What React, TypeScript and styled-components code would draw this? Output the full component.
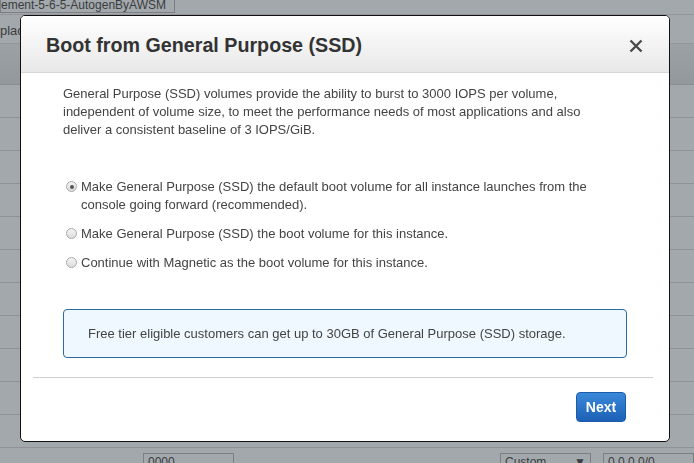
import React, { useState } from 'react';
import styled, { createGlobalStyle } from 'styled-components';

const GlobalStyle = createGlobalStyle`
    html, body {
        margin: 0;
        padding: 0;
        width: 694px;
        height: 463px;
        overflow: hidden;
        background: #a3a8ac;
        font-family: "Liberation Sans", Arial, sans-serif;
    }
`;

// dimmed page behind the dialog
const Page = styled.div`
    width: 694px;
    height: 463px;
    display: flex;
    flex-direction: column;
    background: #a3a8ac;
    color: #3a3d40;
    font-size: 13px;
    overflow: hidden;
`;

const TopInput = styled.div`
    width: 173px;
    height: 12px;
    border: 1px solid #7b7f83;
    border-top: none;
    line-height: 11px;
    font-size: 12px;
    overflow: hidden;
    white-space: nowrap;
    color: #3a3d40;
    margin-bottom: 1px;
    flex-shrink: 0;
`;

const SubRow = styled.div`
    height: 30px;
    border-top: 1px solid #93979b;
    border-bottom: 1px solid #93979b;
    display: flex;
    align-items: center;
    font-size: 13px;
    padding-top: 2px;
    box-sizing: border-box;
    flex-shrink: 0;
`;

const HeaderBand = styled.div`
    height: 40px;
    flex-shrink: 0;
    background: linear-gradient(#9ca1a5, #93989c);
    border-bottom: 1px solid #8a8e92;
`;

const TableRow = styled.div<{ $h: number }>`
    height: ${p => p.$h}px;
    border-bottom: 1px solid #8f9397;
    flex-shrink: 0;
`;

const BottomRow = styled.div`
    display: flex;
    padding-top: 5px;
    flex-shrink: 0;
`;

const PageInput = styled.div<{ $w: number; $ml: number }>`
    width: ${p => p.$w}px;
    height: 18px;
    margin-left: ${p => p.$ml}px;
    border: 1px solid #7b7f83;
    font-size: 12px;
    line-height: 16px;
    padding: 0 4px;
    box-sizing: border-box;
    color: #3a3d40;
    display: flex;
    justify-content: space-between;
`;

const Overlay = styled.div`
    position: fixed;
    inset: 0;
    padding: 15px 0 0 20px;
    box-sizing: border-box;
`;

const Dialog = styled.div`
    width: 650px;
    height: 427px;
    box-sizing: border-box;
    background: #fff;
    border: 1px solid #111;
    border-radius: 5px;
    display: flex;
    flex-direction: column;
    overflow: hidden;
    color: #444;
`;

const DialogHeader = styled.div`
    height: 57px;
    flex-shrink: 0;
    box-sizing: border-box;
    background: linear-gradient(#ffffff, #e8e8e8);
    border-bottom: 1px solid #d6d6d6;
    display: flex;
    align-items: center;
    justify-content: space-between;
    padding: 0 25px 0 25px;
`;

const Title = styled.h1`
    margin: 0;
    font-size: 19.7px;
    font-weight: bold;
    color: #333;
    padding-top: 3px;
`;

const CloseButton = styled.button`
    width: 16px;
    height: 16px;
    padding: 0;
    border: none;
    background: none;
    cursor: pointer;
    margin-top: 4px;
    display: flex;
    align-items: center;
    justify-content: center;
`;

const DialogBody = styled.div`
    padding: 12px 42px 0 42px;
    font-size: 13px;
    line-height: 18px;
`;

const Intro = styled.p`
    margin: 0 0 39px 0;
    max-width: 540px;
`;

const Options = styled.div`
    display: flex;
    flex-direction: column;
    gap: 11px;
    margin-left: 3px;
`;

const Option = styled.label`
    display: flex;
    align-items: flex-start;
    gap: 4px;
    cursor: pointer;
`;

const RadioDot = styled.span<{ $checked: boolean }>`
    flex-shrink: 0;
    width: 11px;
    height: 11px;
    margin-top: 3px;
    border-radius: 50%;
    box-sizing: border-box;
    border: 1px solid #a8a8a8;
    background: linear-gradient(#f4f4f4, #dcdcdc);
    display: flex;
    align-items: center;
    justify-content: center;
    &::after {
        content: '';
        width: 4px;
        height: 4px;
        border-radius: 50%;
        background: ${p => (p.$checked ? '#555' : 'transparent')};
    }
`;

const InfoBox = styled.div`
    margin-top: 37px;
    height: 49px;
    box-sizing: border-box;
    border: 1px solid #2c6aa3;
    border-radius: 4px;
    background: #eff8fe;
    display: flex;
    align-items: center;
    padding: 0 24px;
`;

const Separator = styled.hr`
    margin: 19px 16px 0 12px;
    border: none;
    border-top: 1px solid #cfcfcf;
`;

const Footer = styled.div`
    display: flex;
    justify-content: flex-end;
    padding: 14px 43px 0 0;
`;

const NextButton = styled.button`
    width: 50px;
    height: 30px;
    border: 1px solid #1b5ba8;
    border-radius: 4px;
    background: linear-gradient(#3a88da, #1c61b6);
    color: #fff;
    font-family: "Liberation Sans", Arial, sans-serif;
    font-weight: bold;
    font-size: 14px;
    padding: 0;
    cursor: pointer;
`;

const options = [
    'Make General Purpose (SSD) the default boot volume for all instance launches from the console going forward (recommended).',
    'Make General Purpose (SSD) the boot volume for this instance.',
    'Continue with Magnetic as the boot volume for this instance.',
];

const rowHeights = [32, 32, 32, 32, 32, 32, 32, 32, 32, 32, 32];

const App: React.FC = () => {
    const [choice, setChoice] = useState(0);

    return (
        <>
            <GlobalStyle />
            <Page>
                <TopInput>ement-5-6-5-AutogenByAWSM</TopInput>
                <SubRow>plac</SubRow>
                <HeaderBand />
                {rowHeights.map((h, i) => (
                    <TableRow key={i} $h={h} />
                ))}
                <BottomRow>
                    <PageInput $w={91} $ml={143}>0000</PageInput>
                    <PageInput $w={91} $ml={266}>
                        <span>Custom</span>
                        <span>▼</span>
                    </PageInput>
                    <PageInput $w={91} $ml={12}>0.0.0.0/0</PageInput>
                </BottomRow>
            </Page>
            <Overlay>
                <Dialog>
                    <DialogHeader>
                        <Title>Boot from General Purpose (SSD)</Title>
                        <CloseButton aria-label="Close">
                            <svg width="14" height="14" viewBox="0 0 14 14">
                                <path d="M1.5 1.5 L12.5 12.5 M12.5 1.5 L1.5 12.5" stroke="#4a4a4a" strokeWidth="2.4" />
                            </svg>
                        </CloseButton>
                    </DialogHeader>
                    <DialogBody>
                        <Intro>
                            General Purpose (SSD) volumes provide the ability to burst to 3000 IOPS per volume,
                            independent of volume size, to meet the performance needs of most applications and also
                            deliver a consistent baseline of 3 IOPS/GiB.
                        </Intro>
                        <Options>
                            {options.map((text, i) => (
                                <Option key={i} onClick={() => setChoice(i)}>
                                    <RadioDot $checked={choice === i} />
                                    <span>{text}</span>
                                </Option>
                            ))}
                        </Options>
                        <InfoBox>
                            Free tier eligible customers can get up to 30GB of General Purpose (SSD) storage.
                        </InfoBox>
                    </DialogBody>
                    <Separator />
                    <Footer>
                        <NextButton>Next</NextButton>
                    </Footer>
                </Dialog>
            </Overlay>
        </>
    );
};

export default App;
